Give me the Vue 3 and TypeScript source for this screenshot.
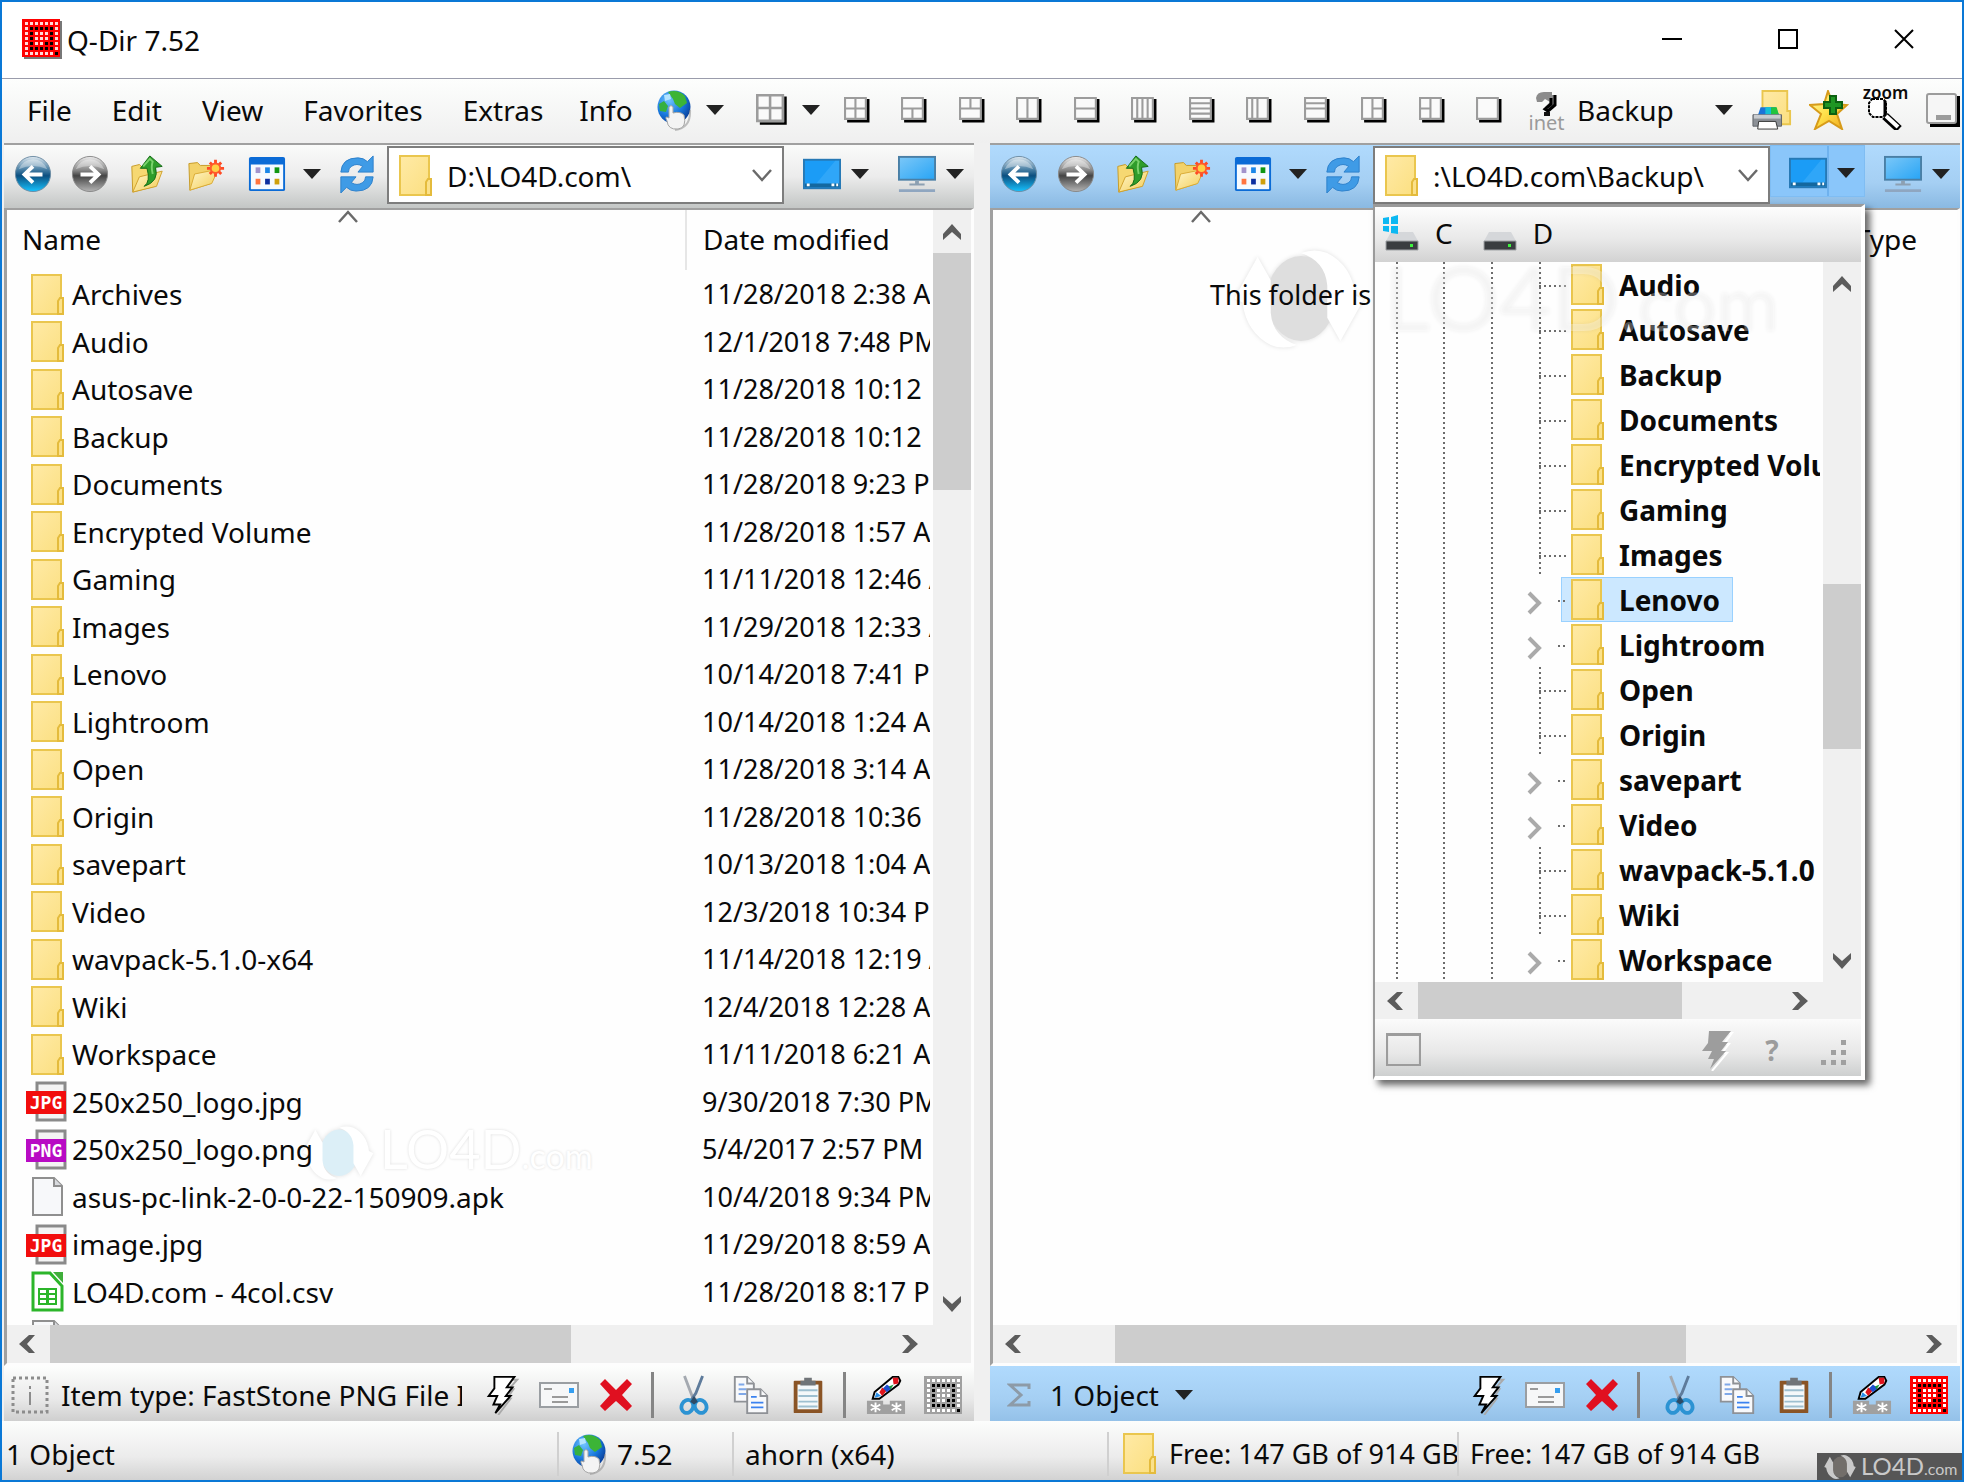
<script setup lang="ts">
import { ref } from 'vue'

interface FileRow {
  name: string
  icon: 'folder' | 'jpg' | 'png' | 'page' | 'sheet'
  date: string
}

interface TreeRow {
  name: string
  expandable?: boolean
  selected?: boolean
}

interface Pane {
  id: string
  label: string
  path: string
  active: boolean
}

const menus = ['File', 'Edit', 'View', 'Favorites', 'Extras', 'Info']

const layouts: { label: string; lines: string }[] = [
  { label: 'Four panes', lines: 'M11 1V21M1 11H21' },
  { label: 'One above two', lines: 'M1 11H21M11 11V21' },
  { label: 'Two above one', lines: 'M1 11H21M11 1V11' },
  { label: 'Two columns', lines: 'M11 1V21' },
  { label: 'Two rows', lines: 'M1 11H21' },
  { label: 'Four columns', lines: 'M6 1V21M11 1V21M16 1V21' },
  { label: 'Four rows', lines: 'M1 6H21M1 11H21M1 16H21' },
  { label: 'Three columns', lines: 'M6 1V21M11 1V21' },
  { label: 'Three rows', lines: 'M1 6H21M1 11H21' },
  { label: 'One beside two', lines: 'M11 1V21M11 11H21' },
  { label: 'Two beside one', lines: 'M11 1V21M1 11H11' },
  { label: 'Single pane', lines: '' },
]

const folder = (name: string, date: string): FileRow => ({ name, date, icon: 'folder' })

const files: FileRow[] = [
  folder('Archives', '11/28/2018 2:38 AM'),
  folder('Audio', '12/1/2018 7:48 PM'),
  folder('Autosave', '11/28/2018 10:12 PM'),
  folder('Backup', '11/28/2018 10:12 PM'),
  folder('Documents', '11/28/2018 9:23 PM'),
  folder('Encrypted Volume', '11/28/2018 1:57 AM'),
  folder('Gaming', '11/11/2018 12:46 AM'),
  folder('Images', '11/29/2018 12:33 AM'),
  folder('Lenovo', '10/14/2018 7:41 PM'),
  folder('Lightroom', '10/14/2018 1:24 AM'),
  folder('Open', '11/28/2018 3:14 AM'),
  folder('Origin', '11/28/2018 10:36 PM'),
  folder('savepart', '10/13/2018 1:04 AM'),
  folder('Video', '12/3/2018 10:34 PM'),
  folder('wavpack-5.1.0-x64', '11/14/2018 12:19 AM'),
  folder('Wiki', '12/4/2018 12:28 AM'),
  folder('Workspace', '11/11/2018 6:21 AM'),
  { name: '250x250_logo.jpg', icon: 'jpg', date: '9/30/2018 7:30 PM' },
  { name: '250x250_logo.png', icon: 'png', date: '5/4/2017 2:57 PM' },
  { name: 'asus-pc-link-2-0-0-22-150909.apk', icon: 'page', date: '10/4/2018 9:34 PM' },
  { name: 'image.jpg', icon: 'jpg', date: '11/29/2018 8:59 AM' },
  { name: 'LO4D.com - 4col.csv', icon: 'sheet', date: '11/28/2018 8:17 PM' },
  { name: '', icon: 'page', date: '' },
]

const tree: TreeRow[] = [
  { name: 'Audio' },
  { name: 'Autosave' },
  { name: 'Backup' },
  { name: 'Documents' },
  { name: 'Encrypted Volume' },
  { name: 'Gaming' },
  { name: 'Images' },
  { name: 'Lenovo', expandable: true, selected: true },
  { name: 'Lightroom', expandable: true },
  { name: 'Open' },
  { name: 'Origin' },
  { name: 'savepart', expandable: true },
  { name: 'Video', expandable: true },
  { name: 'wavpack-5.1.0' },
  { name: 'Wiki' },
  { name: 'Workspace', expandable: true },
]

const panes = ref<Pane[]>([
  { id: 'left', label: 'Left pane', path: 'D:\\LO4D.com\\', active: false },
  { id: 'right', label: 'Right pane', path: ':\\LO4D.com\\Backup\\', active: true },
])

// Dots of the Q-Dir logo: a dark ring with a tail on a 7 by 7 grid.
const logoDots = Array.from({ length: 49 }, (_, i) => {
  const col = i % 7
  const row = Math.floor(i / 7)
  const inner = col >= 1 && col <= 5 && row >= 1 && row <= 5
  const edge = col === 1 || col === 5 || row === 1 || row === 5
  const tail = (col === 6 && row === 6) || (col === 4 && row === 4)
  return { x: 3 + col * 5, y: 3 + row * 5, dark: (inner && edge) || tail }
})
</script>

<template>
  <svg class="defs" aria-hidden="true">
    <defs>
      <linearGradient id="gBlue" x1="0" y1="0" x2="0" y2="1">
        <stop offset="0" stop-color="#dfe9f0" /><stop offset="0.4" stop-color="#3f789f" />
        <stop offset="0.55" stop-color="#0b4f80" /><stop offset="1" stop-color="#17c3ff" />
      </linearGradient>
      <linearGradient id="gGrey" x1="0" y1="0" x2="0" y2="1">
        <stop offset="0" stop-color="#ececec" /><stop offset="0.4" stop-color="#858585" />
        <stop offset="0.55" stop-color="#444" /><stop offset="1" stop-color="#b5b5b5" />
      </linearGradient>
      <linearGradient id="gFolder" x1="0" y1="0" x2="1" y2="1">
        <stop offset="0" stop-color="#ffeaa6" /><stop offset="1" stop-color="#fbdf80" />
      </linearGradient>
      <linearGradient id="gOpen" x1="0" y1="0" x2="1" y2="1">
        <stop offset="0" stop-color="#fff8cf" /><stop offset="1" stop-color="#f3cb52" />
      </linearGradient>
      <linearGradient id="gStar" x1="0" y1="0" x2="1" y2="1">
        <stop offset="0" stop-color="#fff9a8" /><stop offset="0.5" stop-color="#ffe14a" /><stop offset="1" stop-color="#efa51a" />
      </linearGradient>
      <linearGradient id="gScreen" x1="0" y1="0" x2="1" y2="1">
        <stop offset="0" stop-color="#7cc8f8" /><stop offset="1" stop-color="#27a4f5" />
      </linearGradient>
      <radialGradient id="gGlobe" cx="0.35" cy="0.3" r="0.75">
        <stop offset="0" stop-color="#6fc3ff" /><stop offset="0.6" stop-color="#1878dd" /><stop offset="1" stop-color="#0a3e98" />
      </radialGradient>
    </defs>
    <symbol id="back" viewBox="0 0 40 40">
      <circle cx="20" cy="20" r="18.5" fill="url(#gBlue)" stroke="#6d8ca3" stroke-width="1" />
      <path d="M5 15A16 16 0 0 1 35 15Q20 8 5 15Z" fill="#fff" opacity="0.35" />
      <path d="M20 12L11 20.500L20 29M12 20.500H30" fill="none" stroke="#fff" stroke-width="4" />
    </symbol>
    <symbol id="forward" viewBox="0 0 40 40">
      <circle cx="20" cy="20" r="18.5" fill="url(#gGrey)" stroke="#888" stroke-width="1" />
      <path d="M5 15A16 16 0 0 1 35 15Q20 8 5 15Z" fill="#fff" opacity="0.35" />
      <path d="M20 12L29 20.500L20 29M28 20.500H10" fill="none" stroke="#fff" stroke-width="4" />
    </symbol>
    <symbol id="up" viewBox="0 0 40 40">
      <path d="M4 12L12 10L15 13H28V33L5 39Z" fill="#f6d872" stroke="#c69a26" />
      <path d="M5 39L12 23L36 17L30 33Z" fill="url(#gOpen)" stroke="#d0a02a" />
      <path d="M17 33Q24 28 20 14H13L23 1L36 12L29 13Q33 28 17 33Z" fill="#2f9d2b" stroke="#136a14" />
      <path d="M16 12L23 4L26 7Q24 12 26 20" fill="none" stroke="#7ad26c" stroke-width="2" />
    </symbol>
    <symbol id="newfolder" viewBox="0 0 40 40">
      <path d="M2 9L11 8L14 11H25V30L3 37Z" fill="#f3d26a" stroke="#c69a26" />
      <path d="M3 37L8 20L33 15L26 30Z" fill="url(#gOpen)" stroke="#d9aa33" />
      <path d="M30 5V23M21 14H39M24 8L36 20M36 8L24 20" stroke="#ff4a24" stroke-width="3" />
      <circle cx="30" cy="14" r="5" fill="#ffcf45" stroke="#ff5a2c" stroke-width="2" />
    </symbol>
    <symbol id="views" viewBox="0 0 40 40">
      <rect x="1" y="2" width="38" height="36" rx="2" fill="#0b6bd6" />
      <rect x="3" y="10" width="34" height="26" fill="#f6faff" />
      <path d="M8 13h5v6h-5z" fill="#a293cc" /><path d="M18 13h5v6h-5z" fill="#1b86e8" /><path d="M28 13h5v6h-5z" fill="#109612" />
      <path d="M8 25h5v6h-5z" fill="#ff7440" /><path d="M18 25h5v6h-5z" fill="#0c2ea0" /><path d="M28 25h5v6h-5z" fill="#cfa00c" />
    </symbol>
    <symbol id="refresh" viewBox="0 0 40 40">
      <path d="M3 18Q4 3 21 3Q27 3 31 7L37 1V18H21L26 12Q20 8 14 12Q11 14 11 18Z" fill="#3f9be6" stroke="#2c7fca" />
      <path d="M37 23Q36 38 19 38Q13 38 9 34L3 40V23H19L14 29Q20 33 26 29Q29 27 29 23Z" fill="#3f9be6" stroke="#2c7fca" />
    </symbol>
    <symbol id="drive" viewBox="0 0 40 40">
      <rect x="1" y="5" width="38" height="30" fill="#1b9cf6" stroke="#2779b5" stroke-width="2" />
      <path d="M14 30L34 6H38V30Z" fill="#38abfa" opacity="0.7" />
      <path d="M2 30H38V34H2Z" fill="#14689f" /><path d="M4 30h3v3h-3zM30 30h3v3h-3zM35 30h2v3h-2z" fill="#fff" />
    </symbol>
    <symbol id="monitor" viewBox="0 0 40 40">
      <rect x="1" y="2" width="38" height="24" fill="url(#gScreen)" stroke="#4a7fa5" stroke-width="2" />
      <path d="M18 27h4v3h6v2H12v-2h6z" fill="#8da0b2" /><path d="M1 36H39V39H1Z" fill="#8fa6c0" />
    </symbol>
    <symbol id="folder" viewBox="0 0 34 41">
      <path d="M1 1H30V26H32V40H1Z" fill="url(#gFolder)" stroke="#eac64e" stroke-width="2" />
      <path d="M27 40V27L29 24H32V40Z" fill="#fbe18a" stroke="#e4bb3c" stroke-width="2" />
    </symbol>
    <symbol id="page" viewBox="0 0 34 41">
      <path d="M2 2H23L31 10V39H2Z" fill="#f7f8fa" stroke="#8f8f8f" stroke-width="2" />
      <path d="M23 2V10H31" fill="#d8dade" stroke="#8f8f8f" stroke-width="2" />
    </symbol>
    <symbol id="sheet" viewBox="0 0 34 41">
      <path d="M2 2H19L31 15V39H2Z" fill="#fff" stroke="#2cb52a" stroke-width="3" />
      <path d="M22 1H32V12Z" fill="#3fae3a" />
      <path d="M7 17H26V34H7Z" fill="#2cb52a" />
      <path d="M9 19h6v3h-6zM18 19h6v3h-6zM9 24h6v3h-6zM18 24h6v3h-6zM9 29h6v3h-6zM18 29h6v3h-6z" fill="#fff" />
    </symbol>
    <symbol id="globe" viewBox="0 0 36 42">
      <circle cx="18" cy="18" r="16.5" fill="url(#gGlobe)" />
      <path d="M12 3Q22 0 29 7L31 14L24 19L19 15L17 10Z" fill="#3cb436" />
      <path d="M3 15L8 12L12 17L10 23L4 22Z" fill="#35b040" />
      <path d="M8 6L14 5L15 10L9 12Z" fill="#b4e4ff" />
      <path d="M34 21Q35 39 19 41" fill="none" stroke="#888" stroke-width="2" opacity="0.5" />
      <path d="M13 25V18Q15 15 17 18V24Q24 22 28 26Q31 39 22 40Q12 41 11 32Q8 26 13 29Z" fill="#f4f4f4" stroke="#a5a5a5" />
    </symbol>
    <symbol id="inet" viewBox="0 0 40 40">
      <path d="M9 8Q10 1 19 2H25V5H28V14L22 19L18 17L23 12L18 9L15 12H10Z" fill="#8c8c8c" />
      <path d="M28 5V15L21 21L18 19L24 14V8" fill="none" stroke="#000" stroke-width="3" /><path d="M17 22h6v4h-6z" fill="#111" />
    </symbol>
    <symbol id="print" viewBox="0 0 42 42">
      <path d="M11 1H37V22H40V36H11Z" fill="url(#gFolder)" stroke="#eac64e" stroke-width="2" />
      <path d="M9 18H25L29 27H6Z" fill="#1c73d8" /><path d="M14 18h6v8h-6z" fill="#16bfd5" /><path d="M20 18h6l2 8h-8z" fill="#23c43e" />
      <path d="M1 26H31V38H1Z" fill="#8c9096" stroke="#5e6268" /><path d="M2 26H30V30H2Z" fill="#c9ccd0" />
      <path d="M7 33H25L27 41H6Z" fill="#fff" stroke="#333" />
    </symbol>
    <symbol id="star" viewBox="0 0 40 40">
      <path d="M19 1L24 14L38 15L28 24L33 39L20 31L6 39L12 24L1 15L15 14Z" fill="url(#gStar)" stroke="#d79b1a" stroke-width="2" />
      <path d="M21 6h6v6h6v6h-6v6h-6v-6h-6v-6h6z" fill="#1f9623" stroke="#0c6111" stroke-width="2" />
    </symbol>
    <symbol id="magnifier" viewBox="0 0 40 40">
      <path d="M6 9H17L20 12V24L17 27H7L3 23V13Z" fill="#fff" stroke="#000" stroke-width="2" stroke-dasharray="3 1" />
      <path d="M19 11V26" stroke="#000" stroke-width="3" />
      <path d="M19 26L33 39" stroke="#000" stroke-width="8" /><path d="M20 26L32 37" stroke="#fff" stroke-width="4" />
    </symbol>
    <symbol id="bolt" viewBox="0 0 34 42">
      <path d="M12 5H33L24 15H29L22 25H26L13 42" fill="none" stroke="#aaa" stroke-width="2" />
      <path d="M9 2H30L22 13H28L21 22H26L10 40L15 31H8L12 22H3L9 14Z" fill="#fff" stroke="#000" stroke-width="2" />
    </symbol>
    <symbol id="boltgrey" viewBox="0 0 34 42">
      <path d="M12 4H32L24 15H29L22 24H27L12 42" fill="none" stroke="#fff" stroke-width="2" />
      <path d="M9 2H31L22 13H28L21 22H26L10 40L14 30H8L12 22H2L8 14Z" fill="#9d9d9d" />
    </symbol>
    <symbol id="mail" viewBox="0 0 40 40">
      <rect x="1" y="8" width="38" height="24" fill="#f6f7f8" stroke="#9a9ea2" stroke-width="2" />
      <path d="M5 13h8v2h-8zM13 21h16v2h-16zM13 26h16v2h-16z" fill="#9a9a9a" /><path d="M30 13h5v5h-5z" fill="#349ef0" />
    </symbol>
    <symbol id="delete" viewBox="0 0 40 40">
      <path d="M4 9L9 4L20 15L31 4L36 9L26 20L36 31L31 36L20 26L9 36L4 31L14 20Z" fill="#e01020" />
    </symbol>
    <symbol id="cut" viewBox="0 0 40 42">
      <path d="M10 1L18 22L24 28" fill="none" stroke="#a4a9b0" stroke-width="3" />
      <path d="M29 1L22 19L16 28" fill="none" stroke="#5e7b9b" stroke-width="3" />
      <ellipse cx="13" cy="33" rx="6" ry="7" fill="none" stroke="#2c93d3" stroke-width="4" transform="rotate(25 13 33)" />
      <ellipse cx="27" cy="33" rx="6" ry="7" fill="none" stroke="#2c93d3" stroke-width="4" transform="rotate(-25 27 33)" />
      <path d="M16 28L20 22L24 28L20 31Z" fill="#2e4b66" />
    </symbol>
    <symbol id="copy" viewBox="0 0 40 42">
      <g fill="#f8f9fb" stroke="#8e9196" stroke-width="2">
        <path d="M3 2H16L23 9V28H3Z" /><path d="M16 2V9H23" />
      </g>
      <path d="M7 10h6M7 15h8M7 20h8" stroke="#7fa8e8" stroke-width="2" />
      <g fill="#f8f9fb" stroke="#8e9196" stroke-width="2">
        <path d="M16 15H30L37 22V40H16Z" /><path d="M30 15V22H37" />
      </g>
      <path d="M20 23h6M20 29h13M20 34h13" stroke="#3b82f0" stroke-width="2" />
    </symbol>
    <symbol id="paste" viewBox="0 0 40 42">
      <rect x="5" y="6" width="30" height="34" rx="1" fill="#8a5425" />
      <path d="M9 10H31V36H9Z" fill="#f4f8fa" /><path d="M10 16h20M10 22h20M10 28h20M10 33h20" stroke="#9dbfd0" stroke-width="2" />
      <path d="M12 6H16V3H24V6H28V11H12Z" fill="#707478" />
    </symbol>
    <symbol id="pen" viewBox="0 0 42 42">
      <path d="M1 27H18V31H25V27H41V41H1Z" fill="#a0a0a0" />
      <path d="M10 29V39M5 31L15 37M15 31L5 37M32 29V39M27 31L37 37M37 31L27 37" stroke="#fff" stroke-width="2" />
      <path d="M7 25L9 18L28 2L34 2L36 6L34 10L14 25Z" fill="#fff" stroke="#000" stroke-width="2" />
      <path d="M28 3L34 3L34 9L29 10Z" fill="#e0141c" /><path d="M17 13L22 16L17 22L14 18Z" fill="#e0141c" />
      <path d="M22 10L27 14L22 18L18 14Z" fill="#1e4fd0" /><path d="M24 12L29 10L26 15Z" fill="#189a3a" /><path d="M9 24L11 18L16 22Z" fill="#2a8fe8" />
    </symbol>
    <symbol id="disk" viewBox="0 0 38 40">
      <path d="M8 19H30L35 28H3Z" fill="#d5d7da" /><path d="M3 28H35V37H3Z" fill="#3a3d40" stroke="#a0a3a6" />
      <path d="M27 31h3v3h-3z" fill="#3df23d" />
    </symbol>
    <symbol id="diskwin" viewBox="0 0 38 40">
      <path d="M8 19H30L35 28H3Z" fill="#d5d7da" /><path d="M3 28H35V37H3Z" fill="#3a3d40" stroke="#a0a3a6" />
      <path d="M27 31h3v3h-3z" fill="#3df23d" />
      <path d="M0 5L6 4V11H0ZM8 4L15 2V11H8ZM0 13H6V19L0 18ZM8 13H15V21L8 20Z" fill="#0cb8f2" />
    </symbol>
    <symbol id="caret" viewBox="0 0 18 10"><path d="M0 0H18L9 10Z" fill="#222" /></symbol>
    <symbol id="chev" viewBox="0 0 18 16"><path d="M0 10L9 0L18 10V16L9 8L0 16Z" fill="#5c5c5c" /></symbol>
    <symbol id="thinchev" viewBox="0 0 20 14"><path d="M1 12L10 2L19 12" fill="none" stroke="#6a6a6a" stroke-width="2.500" /></symbol>
    <symbol id="arrows" viewBox="0 0 128 105">
      <path d="M23 11L36 34V66Q38 90 62 98Q48 103 36 98Q12 86 8 56L0 52Z" fill="currentColor" />
      <path d="M105 94L92 71V39Q90 15 66 7Q80 2 92 7Q116 19 120 49L128 53Z" fill="currentColor" />
    </symbol>
  </svg>

  <div class="window">
    <header class="titlebar">
      <svg class="logo" viewBox="0 0 40 40" aria-hidden="true">
        <rect x="2" y="2" width="38" height="38" fill="#777" /><rect width="38" height="38" fill="#f00" />
        <rect v-for="(d, i) in logoDots" :key="i" :x="d.x" :y="d.y" width="3" height="3" :fill="d.dark ? '#000' : '#ffd9d9'" />
      </svg>
      <h1>Q-Dir 7.52</h1>
      <div class="winbuttons">
        <button aria-label="Minimize"><svg viewBox="0 0 20 20"><path d="M0 10H20" /></svg></button>
        <button aria-label="Maximize"><svg viewBox="0 0 20 20"><path d="M1 1H19V19H1Z" /></svg></button>
        <button aria-label="Close"><svg viewBox="0 0 20 20"><path d="M1 1L19 19M19 1L1 19" /></svg></button>
      </div>
    </header>

    <div class="menubar">
      <nav>
        <button v-for="m in menus" :key="m">{{ m }}</button>
      </nav>
      <button class="globebtn" aria-label="Web"><svg class="globe"><use href="#globe" /></svg></button>
      <button class="caretbtn" aria-label="Web options"><svg class="caret"><use href="#caret" /></svg></button>
      <button class="quad" aria-label="Pane layout">
        <svg viewBox="0 0 25 25"><path d="M3 23H23V2" fill="none" stroke="#000" stroke-width="2" /><path d="M1 1H21V21H1Z" fill="#fafafa" /><path d="M1 1H21V21H1ZM11 1V21M1 11H21" fill="none" stroke="#9c9c9c" stroke-width="2" /></svg>
      </button>
      <button class="slimcaret" aria-label="Choose layout"><svg class="caret"><use href="#caret" /></svg></button>
      <div class="layouts">
        <button v-for="l in layouts" :key="l.label" :aria-label="l.label">
          <svg viewBox="0 0 25 25"><path d="M3 23H23V2" fill="none" stroke="#000" stroke-width="3" /><path d="M1 1H21V21H1Z" fill="#fafafa" /><path :d="'M1 1H21V21H1Z' + l.lines" fill="none" stroke="#9c9c9c" stroke-width="2" /></svg>
        </button>
      </div>
      <button class="tool inetbtn" aria-label="inet">
        <svg><use href="#inet" /></svg><span>inet</span>
      </button>
      <label class="combo">
        <select aria-label="Favorite folder"><option>Backup</option></select>
        <svg class="caret"><use href="#caret" /></svg>
      </label>
      <button class="tool" aria-label="Print folder"><svg><use href="#print" /></svg></button>
      <button class="tool" aria-label="Add favorite"><svg><use href="#star" /></svg></button>
      <button class="tool zoombtn" aria-label="zoom"><svg><use href="#magnifier" /></svg><span>zoom</span></button>
      <button class="tool boxbtn" aria-label="Tray">
        <svg viewBox="0 0 34 34"><path d="M4 32H32V3" fill="none" stroke="#000" stroke-width="4" /><rect x="1" y="1" width="29" height="29" rx="2" fill="#f6f6f6" stroke="#9c9c9c" stroke-width="2" /><path d="M10 22h15v5h-15z" fill="#9c9c9c" /></svg>
      </button>
    </div>

    <main class="panes">
      <section v-for="p in panes" :key="p.id" class="pane" :class="{ active: p.active }" :aria-label="p.label">
        <div class="toolbar">
          <button class="tb" aria-label="Back"><svg><use href="#back" /></svg></button>
          <button class="tb" aria-label="Forward"><svg><use href="#forward" /></svg></button>
          <button class="tb" aria-label="Up"><svg><use href="#up" /></svg></button>
          <button class="tb wide" aria-label="New folder"><svg><use href="#newfolder" /></svg></button>
          <button class="tb wide" aria-label="Views"><svg><use href="#views" /></svg></button>
          <button class="tb slim" aria-label="View options"><svg class="caret"><use href="#caret" /></svg></button>
          <button class="tb wide" aria-label="Refresh"><svg><use href="#refresh" /></svg></button>
          <div class="addresswrap">
            <div class="address">
              <svg class="fold"><use href="#folder" /></svg>
              <input v-model="p.path" :aria-label="p.label + ' address'" spellcheck="false" />
              <button aria-label="Address history"><svg class="down"><use href="#thinchev" /></svg></button>
            </div>

            <div v-if="p.active" class="popup">
              <div class="drives">
                <button><svg><use href="#diskwin" /></svg>C</button>
                <button><svg><use href="#disk" /></svg>D</button>
              </div>
              <div class="treearea">
                <ul class="tree">
                  <li v-for="t in tree" :key="t.name" :class="{ expandable: t.expandable }">
                    <span class="guides"></span>
                    <span class="branch"><svg v-if="t.expandable" viewBox="0 0 16 24"><path d="M2 2L12 12L2 22" /></svg></span>
                    <span class="node" :class="{ selected: t.selected }"><svg class="fold"><use href="#folder" /></svg>{{ t.name }}</span>
                  </li>
                </ul>
                <div class="vscroll">
                  <button aria-label="Scroll up"><svg><use href="#chev" /></svg></button>
                  <div class="track"><div class="thumb treethumb"></div></div>
                  <button aria-label="Scroll down"><svg class="flip"><use href="#chev" /></svg></button>
                </div>
              </div>
              <div class="hscroll">
                <button aria-label="Scroll left"><svg class="left"><use href="#chev" /></svg></button>
                <div class="track"><div class="thumb popthumb"></div></div>
                <button aria-label="Scroll right"><svg class="right"><use href="#chev" /></svg></button>
                <span class="corner"></span>
              </div>
              <div class="popfoot">
                <button aria-label="Window"><svg class="frame" viewBox="0 0 34 32"><path d="M1 1H33V31H1Z" /><path d="M1 2H33" /></svg></button>
                <span class="grow"></span>
                <button aria-label="Quick actions"><svg class="boltg"><use href="#boltgrey" /></svg></button>
                <button class="help">?</button>
                <svg class="grip" viewBox="0 0 28 28" aria-hidden="true"><path d="M20 0h5v5h-5zM10 10h5v5h-5zM20 10h5v5h-5zM0 20h5v5h-5zM10 20h5v5h-5zM20 20h5v5h-5z" /></svg>
              </div>
            </div>
          </div>
          <button class="tb drop drv" aria-label="Drive tree"><svg><use href="#drive" /></svg><svg class="caret"><use href="#caret" /></svg></button>
          <button class="tb drop" aria-label="Computer"><svg><use href="#monitor" /></svg><svg class="caret"><use href="#caret" /></svg></button>
        </div>

        <div class="list">
          <div v-if="!p.active" class="tablewrap">
            <table>
              <thead>
                <tr>
                  <th class="namecol">Name<svg class="sort"><use href="#thinchev" /></svg></th>
                  <th>Date modified</th>
                </tr>
              </thead>
              <tbody>
                <tr v-for="(f, i) in files" :key="i">
                  <td>
                    <span class="file">
                      <svg v-if="f.icon === 'jpg' || f.icon === 'png'" class="imgicon" viewBox="0 0 42 41">
                        <path d="M12 2H40V39H12Z" fill="#f4f4f4" stroke="#8a8a8a" stroke-width="3" />
                        <rect x="1" y="10" width="40" height="23" :fill="f.icon === 'jpg' ? '#f20d0d' : '#b80bc4'" />
                        <text x="21" y="28" text-anchor="middle">{{ f.icon.toUpperCase() }}</text>
                      </svg>
                      <svg v-else class="fold"><use :href="'#' + f.icon" /></svg>
                      {{ f.name }}
                    </span>
                  </td>
                  <td><span class="date">{{ f.date }}</span></td>
                </tr>
              </tbody>
            </table>
          </div>
          <div v-else class="emptylist">
            <svg class="sort"><use href="#thinchev" /></svg>
            <div class="typehead">Type</div>
            <p>This folder is empty.</p>
          </div>
          <div v-if="!p.active" class="vscroll">
            <button aria-label="Scroll up"><svg><use href="#chev" /></svg></button>
            <div class="track"><div class="thumb listthumb"></div></div>
            <button aria-label="Scroll down"><svg class="flip"><use href="#chev" /></svg></button>
          </div>
        </div>
        <div class="hscroll main">
          <button aria-label="Scroll left"><svg class="left"><use href="#chev" /></svg></button>
          <div class="track"><div class="thumb" :class="p.active ? 'rightthumb' : 'leftthumb'"></div></div>
          <button aria-label="Scroll right"><svg class="right"><use href="#chev" /></svg></button>
          <span v-if="!p.active" class="corner"></span>
        </div>

        <div class="strip">
          <template v-if="!p.active">
            <svg class="info" viewBox="0 0 38 38" aria-hidden="true"><rect x="2" y="2" width="34" height="34" /><path d="M19 10v3M19 16v13" /></svg>
            <span class="itemtype">Item type: FastStone PNG File Image</span>
          </template>
          <template v-else>
            <svg class="sigma" viewBox="0 0 24 24" aria-hidden="true"><path d="M22 6V2H3L14 12L3 22H22V18" /></svg>
            <button class="count">1 Object<svg class="caret"><use href="#caret" /></svg></button>
          </template>
          <span class="grow"></span>
          <div class="tools">
            <button aria-label="Quick actions"><svg><use href="#bolt" /></svg></button>
            <button aria-label="Mail"><svg><use href="#mail" /></svg></button>
            <button aria-label="Delete"><svg><use href="#delete" /></svg></button>
            <span class="sep"></span>
            <button aria-label="Cut"><svg><use href="#cut" /></svg></button>
            <button aria-label="Copy"><svg><use href="#copy" /></svg></button>
            <button aria-label="Paste"><svg><use href="#paste" /></svg></button>
            <span class="sep"></span>
            <button aria-label="Rename"><svg><use href="#pen" /></svg></button>
            <button aria-label="Q-Dir options">
              <svg class="qdir" viewBox="0 0 38 38">
                <rect width="38" height="38" :fill="p.active ? '#f00' : '#a0a0a0'" />
                <rect v-for="(d, i) in logoDots" :key="i" :x="d.x" :y="d.y" width="3" height="3" :fill="d.dark ? '#000' : '#fff'" />
              </svg>
            </button>
          </div>
        </div>

        <div class="mark" :class="p.active ? 'big' : 'small'" aria-hidden="true">
          <svg viewBox="0 0 128 105">
            <ellipse cx="66" cy="52" rx="34" ry="42" :fill="p.active ? '#dedede' : '#dceff7'" />
            <use href="#arrows" />
          </svg>
          <span>LO4D<small>.com</small></span>
        </div>
      </section>
    </main>

    <footer class="status">
      <span class="cell objects">1 Object</span>
      <span class="cell version"><svg class="globe"><use href="#globe" /></svg>7.52</span>
      <span class="cell host">ahorn (x64)</span>
      <span class="cell free"><svg class="fold"><use href="#folder" /></svg><span>Free: 147 GB of 914 GB</span></span>
      <span class="cell total">Free: 147 GB of 914 GB</span>
      <div class="badge">
        <svg viewBox="0 0 128 105"><ellipse cx="66" cy="52" rx="34" ry="42" fill="#726e6a" /><use href="#arrows" /></svg>
        <span>LO4D<small>.com</small></span>
      </div>
    </footer>
  </div>
</template>

<style>
body {
  margin: 0;
  background: #fff;
}
</style>

<style scoped>
* {
  box-sizing: border-box;
}
button,
input,
select {
  font: inherit;
  color: inherit;
  border: 0;
  padding: 0;
  margin: 0;
  background: none;
  outline: 0;
}
button {
  display: flex;
  align-items: center;
  justify-content: center;
}
svg {
  display: block;
  flex: none;
}
.defs {
  position: absolute;
  width: 0;
  height: 0;
}
.grow {
  flex: 1;
}
.caret {
  width: 18px;
  height: 10px;
}
.fold {
  width: 34px;
  height: 41px;
}
.window {
  display: flex;
  flex-direction: column;
  height: 100vh;
  overflow: hidden;
  border: 2px solid #0a78d6;
  background: #f0f0f0;
  color: #0a0a0a;
  font-family: "Noto Sans", "Open Sans", sans-serif;
  font-size: 28px;
  line-height: 40px;
  white-space: nowrap;
}

.titlebar {
  display: flex;
  align-items: center;
  height: 77px;
  padding: 0 0 3px 20px;
  background: #fff;
  border-bottom: 1px solid #9a9cab;
}
.logo {
  width: 40px;
  height: 40px;
}
h1 {
  margin: 2px 0 0 5px;
  font-size: 28px;
  font-weight: 400;
}
.winbuttons {
  display: flex;
  margin-left: auto;
}
.winbuttons button {
  width: 116px;
  height: 72px;
}
.winbuttons svg {
  width: 20px;
  height: 20px;
  fill: none;
  stroke: #000;
  stroke-width: 2;
}

.menubar {
  display: flex;
  align-items: center;
  height: 64px;
  flex: none;
  overflow: hidden;
  padding-bottom: 2px;
  background: linear-gradient(#fdfefd, #efefef);
}
.menubar > * {
  flex: none;
}
nav {
  display: flex;
  width: 650px;
  padding-left: 5px;
}
nav button {
  padding: 0 20px;
}
nav button:last-child {
  padding-left: 16px;
}
.globe {
  width: 36px;
  height: 42px;
}
.globebtn {
  width: 44px;
}
.caretbtn {
  width: 38px;
  margin-right: 9px;
}
.quad {
  width: 58px;
}
.quad svg {
  width: 32px;
  height: 32px;
}
.slimcaret {
  width: 20px;
  margin-right: 7px;
}
.layouts {
  display: grid;
  grid-template-columns: repeat(12, 1fr);
  width: 690px;
}
.layouts svg {
  width: 26px;
  height: 26px;
}
.tool {
  width: 57px;
  position: relative;
}
.tool svg {
  width: 40px;
  height: 40px;
}
.tool span {
  position: absolute;
  left: 50%;
  transform: translateX(-50%);
  line-height: 20px;
}
.inetbtn span {
  bottom: -3px;
  font-size: 20px;
  color: #9a9a9a;
}
.zoombtn span {
  top: -7px;
  font-size: 17px;
  font-weight: 600;
}
.tool.boxbtn svg {
  width: 34px;
  height: 34px;
}
.combo {
  display: flex;
  align-items: center;
  width: 168px;
}
.combo select {
  appearance: none;
  width: 140px;
  padding-left: 2px;
}

.panes {
  display: flex;
  flex: 1;
  min-height: 0;
  gap: 16px;
  padding: 0 2px;
}
.pane {
  position: relative;
  display: flex;
  flex-direction: column;
  flex: 1 1 0;
  min-width: 0;
}
.toolbar {
  display: flex;
  align-items: center;
  flex: none;
  height: 65px;
  padding-bottom: 3px;
  border-top: 2px solid #a0a0a0;
  background: linear-gradient(#fafbfa, #ececec 50%, #c3c6c5);
}
.active .toolbar {
  background: linear-gradient(#b0dafd, #a5cff3 60%, #8ab9e2);
}
.tb {
  width: 57px;
  height: 58px;
  padding-bottom: 3px;
}
.tb svg {
  width: 38px;
  height: 38px;
}
.tb svg.caret {
  width: 18px;
  height: 10px;
}
.tb.wide {
  width: 61px;
}
.tb.slim {
  width: 29px;
}
.addresswrap {
  position: relative;
  flex: 1;
  min-width: 0;
}
.address {
  display: flex;
  align-items: center;
  height: 58px;
  border: 2px solid #7d7d7d;
  background: #fff;
  padding-left: 10px;
}
.address input {
  flex: 1;
  min-width: 0;
  padding: 2px 0 0 14px;
}
.address button {
  width: 40px;
  height: 52px;
}
.down {
  width: 20px;
  height: 14px;
  transform: rotate(180deg);
}
.tb.drop {
  width: 95px;
  gap: 10px;
  padding-left: 8px;
}
.active .tb.drv {
  align-self: flex-start;
  height: 52px;
  padding-top: 6px;
  border: 1px solid #7fbdf3;
  background: linear-gradient(90deg, #8ac6fa 56px, #6fb2ee 56px, #6fb2ee 58px, #8ac6fa 58px);
}

.list {
  display: flex;
  flex: 1 1 0;
  min-height: 0;
  overflow: hidden;
  border-top: 2px solid #a0a0a0;
  border-left: 3px solid #a0a0a0;
  border-right: 3px solid #fdfdfd;
  background: #fefefe;
}
.tablewrap {
  flex: 1;
  min-width: 0;
  overflow: hidden;
}
table {
  width: 100%;
  table-layout: fixed;
  border-collapse: collapse;
}
th,
td {
  padding: 0;
  text-align: left;
  font-weight: 400;
  overflow: hidden;
}
th {
  height: 60px;
  padding: 0 0 2px 16px;
}
th.namecol {
  position: relative;
  width: 679px;
  padding-left: 15px;
  border-right: 2px solid #e6e6e6;
}
.sort {
  position: absolute;
  top: 0;
  left: 50%;
  width: 20px;
  height: 14px;
  margin-left: -8px;
}
tbody tr {
  height: 48px;
}
tbody tr:nth-child(even) {
  height: 47px;
}
.file {
  position: relative;
  z-index: 1;
  display: flex;
  align-items: center;
  height: 47px;
  gap: 7px;
  padding-left: 24px;
}
.imgicon {
  width: 42px;
  height: 41px;
  margin-left: -6px;
  margin-right: -2px;
}
.imgicon text {
  font: 700 18px "DejaVu Sans Mono", monospace;
  fill: #fff;
}
.date {
  display: block;
  margin: 0 3px 0 16px;
  overflow: hidden;
  font-size: 27px;
}
.emptylist {
  position: relative;
  flex: 1;
}
.emptylist .sort {
  left: 206px;
}
.typehead {
  height: 60px;
  padding: 9px 40px 0 0;
  text-align: right;
}
.emptylist p {
  position: relative;
  z-index: 1;
  margin: 5px 0 0 217px;
  font-size: 27px;
}

.vscroll {
  display: flex;
  flex-direction: column;
  width: 38px;
  flex: none;
  background: #f0f0f0;
}
.vscroll button {
  height: 43px;
  flex: none;
}
.track {
  flex: 1;
}
.thumb {
  background: #cdcdcd;
}
.vscroll svg,
.hscroll svg {
  width: 18px;
  height: 16px;
}
.flip {
  transform: rotate(180deg);
}
.hscroll svg.left {
  transform: rotate(-90deg);
}
.hscroll svg.right {
  transform: rotate(90deg);
}
.listthumb {
  height: 23%;
}
.treethumb {
  position: relative;
  top: 44%;
  height: 26%;
}
.hscroll {
  display: flex;
  flex: none;
  height: 37px;
  background: #f0f0f0;
}
.hscroll.main {
  height: 41px;
  border-left: 3px solid #a0a0a0;
  border-right: 3px solid #fdfdfd;
  border-bottom: 3px solid #fdfdfd;
}
.hscroll button {
  width: 43px;
  padding-right: 3px;
}
.hscroll .thumb {
  height: 100%;
}
.corner {
  width: 38px;
}
.leftthumb {
  width: 62%;
}
.rightthumb {
  width: 65%;
  margin-left: 9%;
}
.popthumb {
  width: 73%;
}

.strip {
  display: flex;
  align-items: center;
  flex: none;
  height: 55px;
  padding: 2px 3px 0 0;
  background: linear-gradient(#fdfefd, #e9e9e9 60%, #cfcfcf);
}
.active .strip {
  background: linear-gradient(#b0dafd, #a5cff3 60%, #94c1e8);
}
.info {
  width: 38px;
  height: 38px;
  margin: 0 12px 0 7px;
  fill: none;
  stroke: #8c8c8c;
  stroke-width: 3;
}
.info rect {
  stroke-dasharray: 3 3;
}
.info path {
  stroke-width: 2;
}
.itemtype {
  width: 401px;
  overflow: hidden;
}
.sigma {
  width: 24px;
  height: 24px;
  margin: 0 19px 0 17px;
  fill: none;
  stroke: #8d9ba8;
  stroke-width: 3;
}
.count {
  gap: 16px;
}
.tools {
  display: flex;
  align-items: center;
}
.tools button {
  width: 57px;
}
.tools svg {
  width: 40px;
  height: 40px;
}
.tools svg.qdir {
  width: 38px;
  height: 38px;
}
.sep {
  width: 3px;
  height: 46px;
  margin: 0 11px 0 7px;
  background: #858585;
}

.popup {
  position: absolute;
  z-index: 2;
  top: 100%;
  left: 0;
  width: 492px;
  border: 2px solid #9a9a9a;
  border-top-width: 3px;
  border-right: 4px solid #fff;
  border-bottom: 4px solid #fff;
  background: #fefefe;
  box-shadow: 5px 5px 7px rgba(0, 0, 0, 0.6);
}
.drives {
  display: flex;
  gap: 28px;
  height: 55px;
  padding: 0 0 4px 8px;
  background: linear-gradient(#fdfdfd, #e8e8e8 60%, #d2d2d2);
}
.drives button {
  gap: 14px;
}
.drives svg {
  width: 38px;
  height: 40px;
}
.treearea {
  display: flex;
}
.tree {
  flex: 1;
  min-width: 0;
  margin: 0;
  padding: 0;
  list-style: none;
  font-weight: 700;
}
.tree li {
  display: flex;
  align-items: center;
  height: 45px;
  margin-right: 3px;
  overflow: hidden;
}
.guides {
  align-self: stretch;
  width: 164px;
  flex: none;
  background:
    repeating-linear-gradient(transparent 0 2px, #fefefe 2px 5px),
    linear-gradient(90deg, transparent 21px, #6c6c6c 21px 23px, transparent 23px 68px, #6c6c6c 68px 70px, transparent 70px 116px, #6c6c6c 116px 118px, transparent 118px);
}
.branch {
  position: relative;
  z-index: 1;
  align-self: stretch;
  width: 27px;
  margin-right: -5px;
  flex: none;
  background:
    repeating-linear-gradient(90deg, #6c6c6c 0 2px, transparent 2px 5px) 0 23px / 27px 2px no-repeat,
    repeating-linear-gradient(#6c6c6c 0 2px, transparent 2px 5px) 0 0 / 2px 100% no-repeat;
}
.expandable .branch {
  display: flex;
  align-items: center;
  background: repeating-linear-gradient(90deg, #6c6c6c 0 2px, transparent 2px 5px) 19px 23px / 7px 2px no-repeat;
}
.branch svg {
  width: 16px;
  height: 24px;
  margin: 6px 0 0 -12px;
  fill: none;
  stroke: #aaa;
  stroke-width: 4;
}
.node {
  display: flex;
  align-items: center;
  gap: 14px;
  height: 45px;
  padding: 0 12px 0 9px;
  border: 1px solid transparent;
}
.node.selected {
  background: #cce8ff;
  border-color: #99d1ff;
}
.popfoot {
  display: flex;
  align-items: center;
  height: 57px;
  padding: 4px 12px 0 11px;
  background: linear-gradient(#fbfbfb, #e8e8e8 60%, #cdcfcf);
}
.frame {
  width: 35px;
  height: 33px;
  fill: none;
  stroke: #9c9c9c;
  stroke-width: 2;
}
.boltg {
  width: 34px;
  height: 42px;
}
.help {
  width: 76px;
  margin-right: 11px;
  color: #9c9c9c;
  font-weight: 700;
}
.grip {
  width: 28px;
  height: 28px;
  margin-top: 8px;
  fill: #a0a0a0;
}

.mark {
  position: absolute;
  display: flex;
  align-items: center;
  pointer-events: none;
  color: #fff;
  font-family: Lato, "Open Sans", sans-serif;
}
.mark svg {
  filter: drop-shadow(0 0 2px rgba(0, 0, 0, 0.12));
}
.mark span {
  position: relative;
  z-index: 3;
}
.mark.small {
  top: 976px;
  left: 298px;
  font-size: 54px;
  line-height: 60px;
  gap: 6px;
  text-shadow: 0 0 3px rgba(0, 0, 0, 0.14);
}
.mark.small svg {
  width: 72px;
  height: 58px;
}
.mark small {
  font-size: 34px;
}
.mark.big {
  top: 98px;
  left: 244px;
  gap: 20px;
  font-size: 90px;
  line-height: 110px;
  color: rgba(255, 255, 255, 0.3);
  text-shadow: 0 0 4px rgba(0, 0, 0, 0.06);
}
.mark.big svg {
  width: 130px;
  height: 106px;
  color: #fff;
}
.mark.big small {
  font-size: 76px;
}

.status {
  position: relative;
  display: flex;
  align-items: center;
  flex: none;
  height: 59px;
  padding-top: 6px;
  background: linear-gradient(#fcfdfc, #ececec 60%, #d2d2d2);
}
.cell {
  display: flex;
  align-items: center;
  height: 44px;
  flex: none;
  overflow: hidden;
  border-right: 2px solid #d0d0d0;
}
.objects {
  width: 557px;
  padding-left: 4px;
}
.version {
  width: 175px;
  gap: 10px;
  padding-left: 12px;
}
.host {
  width: 375px;
  padding-left: 11px;
}
.free {
  width: 350px;
  gap: 12px;
  padding-left: 14px;
  font-size: 27px;
}
.total {
  padding-left: 11px;
  font-size: 27px;
  border: 0;
}
.badge {
  position: absolute;
  right: 0;
  bottom: 0;
  display: flex;
  align-items: center;
  gap: 4px;
  width: 145px;
  height: 27px;
  padding-left: 6px;
  background: #565656;
  color: #c9c9c9;
  font-family: Lato, "Open Sans", sans-serif;
  font-size: 24px;
  line-height: 27px;
}
.badge svg {
  width: 34px;
  height: 26px;
}
.badge small {
  font-size: 16px;
}
</style>
